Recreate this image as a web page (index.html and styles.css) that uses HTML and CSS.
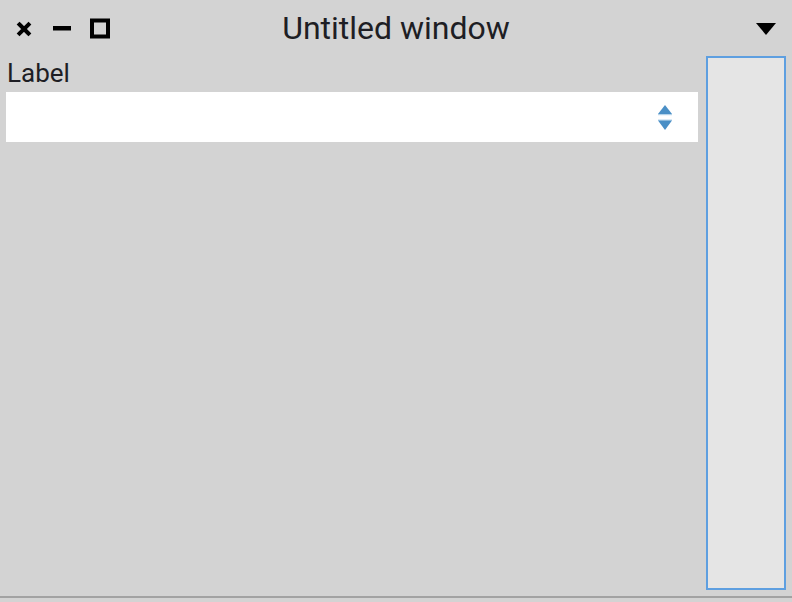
FILE: index.html
```html
<!DOCTYPE html>
<html>
<head>
<meta charset="utf-8">
<link rel="stylesheet" href="styles.css">
</head>
<body>
<div class="window">
  <div class="titlebar">
    <div class="controls">
      <svg class="ctl-close" width="16" height="16" viewBox="0 0 16 16"><path d="M3.5 3.5 L12.5 12.5 M12.5 3.5 L3.5 12.5" stroke="#000" stroke-width="4" stroke-linecap="square"/></svg>
      <svg class="ctl-min" width="20" height="8" viewBox="0 0 20 8"><rect x="1" y="2" width="18" height="4.5" fill="#000"/></svg>
      <svg class="ctl-max" width="20" height="21" viewBox="0 0 20 21"><rect x="2" y="2.5" width="16" height="16" fill="none" stroke="#000" stroke-width="4"/></svg>
    </div>
    <div class="title">Untitled window</div>
    <div class="menu">
      <svg width="20" height="12" viewBox="0 0 20 12"><path d="M0 0 H20 L10 12 Z" fill="#000"/></svg>
    </div>
  </div>
  <div class="content">
    <div class="main">
      <div class="label">Label</div>
      <div class="combo">
        <svg class="spinner" width="14" height="26" viewBox="0 0 14 26">
          <path d="M7 0 L14 9 H0 Z" fill="#4a8fc6"/>
          <rect x="0" y="9" width="14" height="1.2" fill="#b5d3ea"/>
          <rect x="0" y="14.5" width="14" height="1.2" fill="#b5d3ea"/>
          <path d="M0 15.5 H14 L7 25 Z" fill="#4a8fc6"/>
        </svg>
      </div>
    </div>
    <div class="panel"></div>
  </div>
</div>
</body>
</html>
```

FILE: styles.css
```css
html, body {
  margin: 0;
  padding: 0;
  background: #d3d3d3;
}

.window {
  width: 792px;
  height: 598px;
  box-sizing: border-box;
  border-bottom: 2px solid #a2a2a2;
  display: flex;
  flex-direction: column;
  font-family: Roboto, "Noto Sans", sans-serif;
  color: #1e1e24;
}

.titlebar {
  height: 56px;
  flex: none;
  display: grid;
  grid-template-columns: 1fr auto 1fr;
  align-items: center;
}

.controls {
  display: flex;
  align-items: center;
  padding-left: 16px;
}

.ctl-close {
  margin-top: 1px;
}

.ctl-min {
  margin-left: 20px;
}

.ctl-max {
  margin-left: 18px;
}

.title {
  font-size: 32px;
  line-height: 55px;
  white-space: nowrap;
}

.menu {
  display: flex;
  justify-content: flex-end;
  padding-right: 16px;
  padding-top: 1px;
}

.menu svg {
  display: block;
}

.content {
  flex: 1;
  display: flex;
  gap: 8px;
  padding: 0 6px 6px 6px;
  min-height: 0;
}

.main {
  flex: 1;
  display: flex;
  flex-direction: column;
}

.label {
  font-size: 26px;
  line-height: 30px;
  padding-top: 2px;
  padding-left: 1px;
}

.combo {
  margin-top: 4px;
  height: 50px;
  background: #ffffff;
  display: flex;
  align-items: center;
  justify-content: flex-end;
  padding-right: 26px;
}

.spinner {
  display: block;
  margin-top: 1px;
}

.panel {
  width: 80px;
  box-sizing: border-box;
  border: 2px solid #5e9fe0;
  background: #e5e5e5;
}
```
